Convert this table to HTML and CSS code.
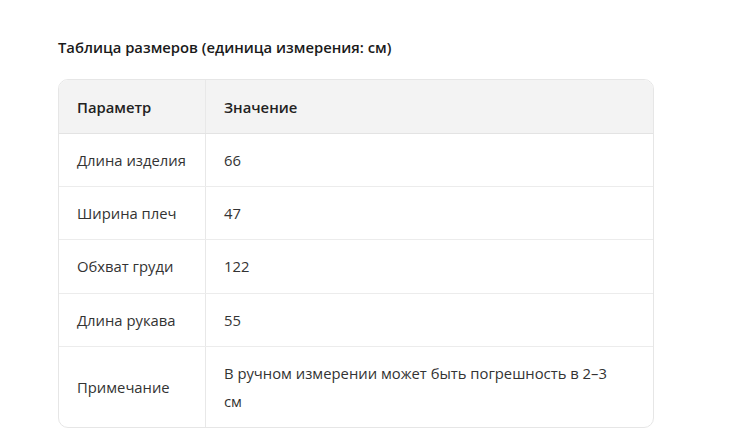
FILE: index.html
```html
<!DOCTYPE html>
<html lang="ru">
<head>
<meta charset="utf-8">
<link rel="stylesheet" href="styles.css">
</head>
<body>
<div class="page">
  <h3 class="title">Таблица размеров (единица измерения: см)</h3>
  <div class="table-wrap">
    <table class="sizes">
      <thead>
        <tr><th class="c1">Параметр</th><th class="c2">Значение</th></tr>
      </thead>
      <tbody>
        <tr><td class="c1">Длина изделия</td><td class="c2">66</td></tr>
        <tr><td class="c1">Ширина плеч</td><td class="c2">47</td></tr>
        <tr><td class="c1">Обхват груди</td><td class="c2">122</td></tr>
        <tr><td class="c1">Длина рукава</td><td class="c2">55</td></tr>
        <tr><td class="c1">Примечание</td><td class="c2">В ручном измерении может быть погрешность в 2–3 см</td></tr>
      </tbody>
    </table>
  </div>
</div>
</body>
</html>
```

FILE: styles.css
```css
html, body {
  margin: 0;
  padding: 0;
  background: #ffffff;
}
body {
  font-family: "Open Sans", "Noto Sans", sans-serif;
  color: #333333;
  font-size: 15px;
}
.page {
  padding: 36px 0 0 58px;
  width: 596px;
}
.title {
  margin: 0 0 21px 0;
  font-size: 14.8px;
  font-weight: 600;
  line-height: 22px;
  color: #1a1a1a;
}
.table-wrap {
  border: 1px solid #e6e6e6;
  border-radius: 10px;
  overflow: hidden;
}
.sizes {
  width: 100%;
  border-collapse: collapse;
}
.sizes th, .sizes td {
  text-align: left;
  padding: 12px 18px 12.25px 18px;
  line-height: 28px;
  vertical-align: middle;
  font-size: 14.8px;
  color: #333333;
}
.sizes th {
  background: #f3f3f3;
  font-weight: 600;
  border-bottom: 1px solid #e3e3e3;
  color: #222222;
  padding-top: 12.5px;
}
.sizes td {
  font-weight: 400;
  border-bottom: 1px solid #ececec;
}
.sizes tbody tr:last-child td {
  border-bottom: none;
  padding-top: 12px;
  padding-bottom: 12px;
}
.sizes .c1 {
  width: 110px;
  border-right: 1px solid #e8e8e8;
}
.sizes .c2 {
  padding-right: 30px;
}
```
